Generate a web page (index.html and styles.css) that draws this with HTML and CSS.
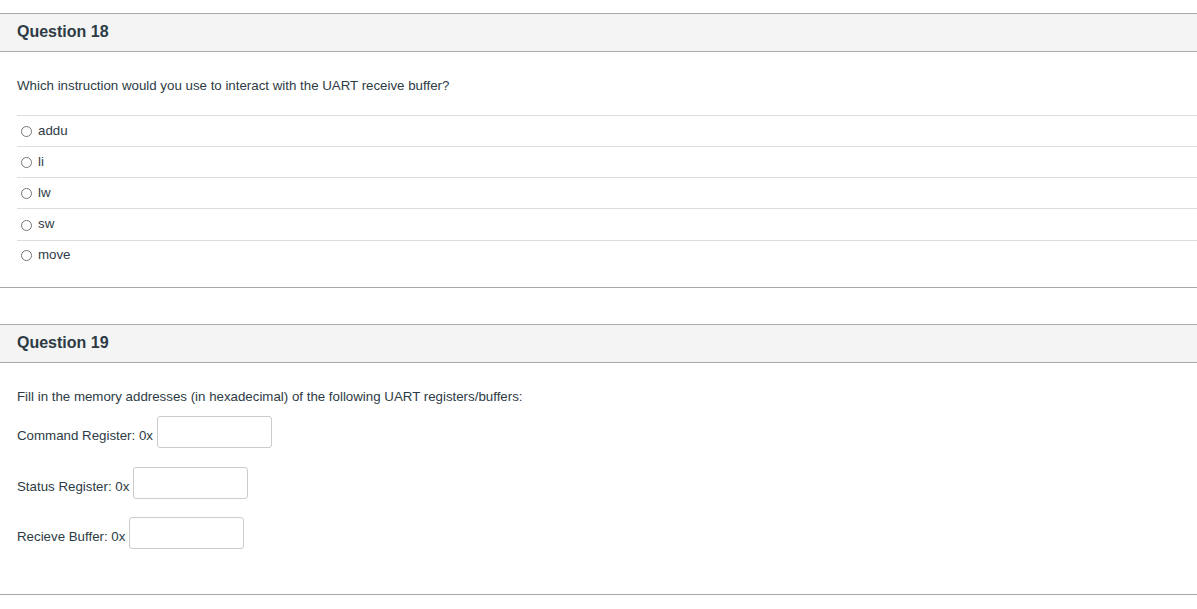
FILE: index.html
```html
<!DOCTYPE html>
<html>
<head>
<meta charset="utf-8">
<link rel="stylesheet" href="styles.css">
</head>
<body>
<div class="page">
  <div class="question">
    <div class="q-header">Question 18</div>
    <div class="q-text">Which instruction would you use to interact with the UART receive buffer?</div>
    <div class="answers">
      <div class="answer"><span class="radio"></span><span class="label">addu</span></div>
      <div class="answer"><span class="radio"></span><span class="label">li</span></div>
      <div class="answer"><span class="radio"></span><span class="label">lw</span></div>
      <div class="answer tall"><span class="radio"></span><span class="label">sw</span></div>
      <div class="answer last"><span class="radio"></span><span class="label">move</span></div>
    </div>
  </div>
  <div class="question">
    <div class="q-header">Question 19</div>
    <div class="q-text">Fill in the memory addresses (in hexadecimal) of the following UART registers/buffers:</div>
    <div class="fields">
      <div class="field"><span class="field-label">Command Register: 0x </span><span class="input"></span></div>
      <div class="field"><span class="field-label">Status Register: 0x </span><span class="input"></span></div>
      <div class="field"><span class="field-label">Recieve Buffer: 0x </span><span class="input"></span></div>
    </div>
  </div>
</div>
</body>
</html>
```
FILE: styles.css
```css
html, body {
  margin: 0;
  padding: 0;
  background: #ffffff;
}
body {
  font-family: "Liberation Sans", Arial, sans-serif;
  font-size: 13.3px;
  color: #2d3b45;
}
.page {
  padding-top: 13px;
}
.question {
  border-bottom: 1px solid #aaaaaa;
  margin-bottom: 36px;
}
.q-header {
  background: #f4f4f4;
  border-top: 1px solid #aaaaaa;
  border-bottom: 1px solid #aaaaaa;
  height: 37px;
  line-height: 35px;
  padding: 0 17px;
  font-size: 16px;
  font-weight: bold;
}
.q-text {
  padding: 25px 17px 0;
  line-height: 18px;
}
.answers {
  margin: 20px 0 0 17px;
  padding-bottom: 15px;
}
.answer {
  display: flex;
  align-items: center;
  height: 30px;
  border-top: 1px solid #dddddd;
  box-sizing: content-box;
}
.answer > * {
  margin-top: -1px;
}
.answer.tall {
  height: 31px;
}
.answer.last {
  height: 28px;
  padding-bottom: 3px;
}
.radio {
  width: 9px;
  height: 9px;
  border: 1px solid #767676;
  border-radius: 50%;
  margin-left: 4px;
  box-sizing: content-box;
  position: relative;
  top: 1px;
}
.label {
  margin-left: 6px;
  line-height: 18px;
}
.fields {
  padding: 10px 17px 45px;
  display: flex;
  flex-direction: column;
  gap: 18.5px;
}
.field {
  display: flex;
  align-items: flex-end;
  height: 32px;
}
.field-label {
  white-space: pre;
  line-height: 18px;
  padding-bottom: 3px;
}
.input {
  display: inline-block;
  width: 113px;
  height: 30px;
  border: 1px solid #cccccc;
  border-radius: 3px;
  background: #ffffff;
}
```
